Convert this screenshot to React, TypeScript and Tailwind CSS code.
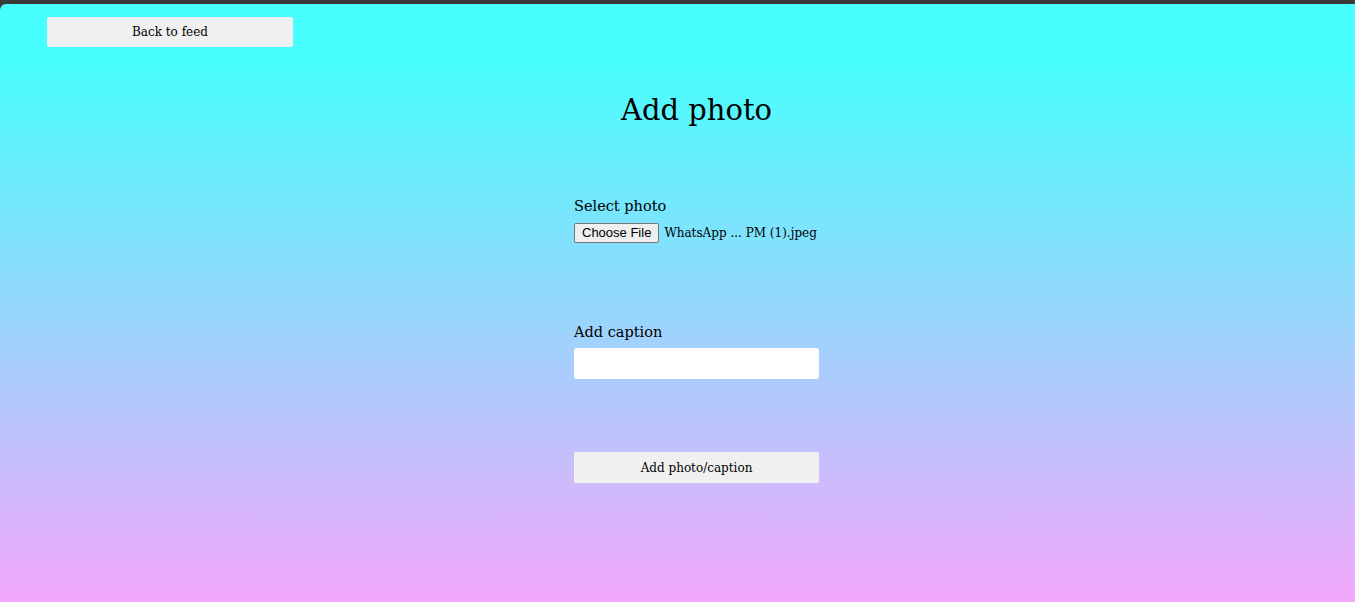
import React from "react";

export default function App() {
  return (
    <div className="h-[602px] overflow-hidden bg-[#3a3a3a] pt-[4px]">
      <div className="h-[598px] rounded-tl-[6px] bg-[linear-gradient(to_bottom,#47ffff_9%,#f3a8fc_100%)] font-['DejaVu_Serif',serif] text-black">
        <div className="pl-[47px] pt-[13px]">
          <button className="h-[30px] w-[246px] rounded-[2px] bg-[#f0f0f0] text-[12px]">
            Back to feed
          </button>
        </div>
        <div className="flex flex-col items-center pl-[38px]">
          <h1 className="mt-[38px] h-[50px] text-[29px] leading-[50px]">Add photo</h1>
          <div className="mt-[61px] flex w-[245px] flex-col">
            <label className="text-[14.5px] leading-[20px]">Select photo</label>
            <div className="mt-[7px] flex items-center gap-[5px]">
              <span className="flex h-[20px] items-center rounded-[2px] border border-[#767676] bg-[#efefef] px-[7px] font-['Liberation_Sans',sans-serif] text-[13px]">
                Choose File
              </span>
              <span className="text-[12px]">WhatsApp ... PM (1).jpeg</span>
            </div>
            <label className="mt-[79px] text-[14.5px] leading-[20px]">Add caption</label>
            <input className="mt-[6px] h-[31px] w-[245px] rounded-[3px] bg-white px-2 outline-none" />
            <button className="mt-[73px] h-[31px] w-[245px] rounded-[2px] bg-[#f0f0f0] text-[12px]">
              Add photo/caption
            </button>
          </div>
        </div>
      </div>
    </div>
  );
}
